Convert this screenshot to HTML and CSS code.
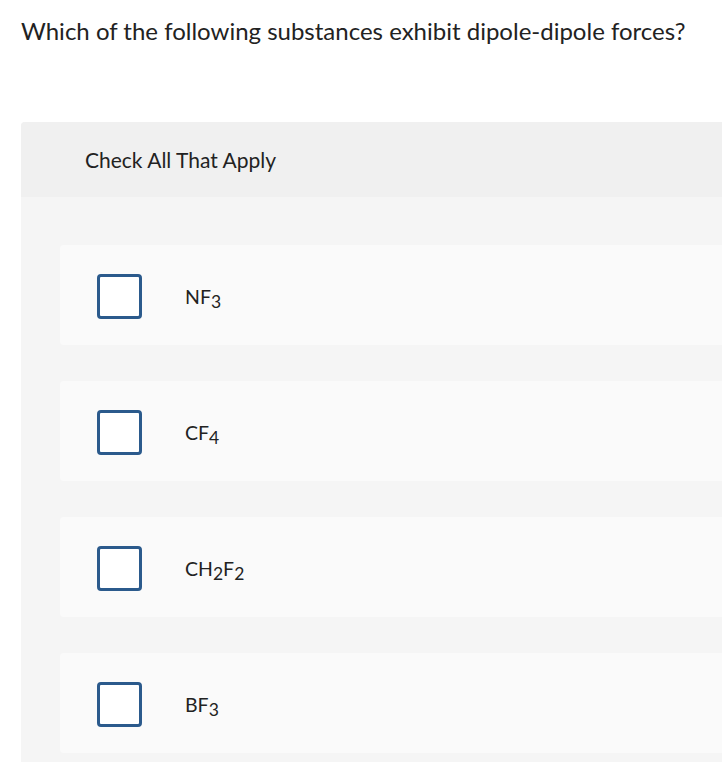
FILE: index.html
```html
<!DOCTYPE html>
<html>
<head>
<meta charset="utf-8">
<link rel="stylesheet" href="styles.css">
</head>
<body>
<p class="question">Which of the following substances exhibit dipole-dipole forces?</p>
<div class="panel">
  <div class="panel-head">Check All That Apply</div>
  <div class="options">
    <label class="option"><span class="box"></span><span class="text">NF<sub>3</sub></span></label>
    <label class="option"><span class="box"></span><span class="text">CF<sub>4</sub></span></label>
    <label class="option"><span class="box"></span><span class="text">CH<sub>2</sub>F<sub>2</sub></span></label>
    <label class="option"><span class="box"></span><span class="text">BF<sub>3</sub></span></label>
  </div>
</div>
</body>
</html>
```
FILE: styles.css
```css
html, body {
  margin: 0;
  padding: 0;
  background: #ffffff;
}
body {
  font-family: Lato, "Liberation Sans", sans-serif;
  color: #222222;
  overflow: hidden;
  height: 762px;
}
.question {
  margin: 0;
  padding: 16px 0 0 21px;
  font-size: 24px;
  line-height: 30px;
}
.panel {
  margin: 76px 0 0 21px;
  background: #f5f5f5;
  border-top-left-radius: 4px;
  height: 640px;
}
.panel-head {
  height: 75px;
  background: #f0f0f0;
  border-top-left-radius: 4px;
  display: flex;
  align-items: center;
  padding-left: 64px;
  font-size: 21px;
}
.options {
  display: flex;
  flex-direction: column;
  gap: 36px;
  padding: 48px 0 0 39px;
}
.option {
  display: flex;
  align-items: center;
  height: 100px;
  background: #fafafa;
  border-radius: 4px 0 0 4px;
  padding-left: 37px;
  padding-top: 2px;
  box-sizing: border-box;
}
.box {
  width: 45px;
  height: 45px;
  box-sizing: border-box;
  border: 3px solid #2b5a8c;
  border-radius: 4px;
  background: #ffffff;
  flex: none;
}
.text {
  margin-left: 43px;
  font-size: 19.5px;
}
.text sub {
  font-size: 0.9em;
  vertical-align: -4px;
  line-height: 0;
}
```
